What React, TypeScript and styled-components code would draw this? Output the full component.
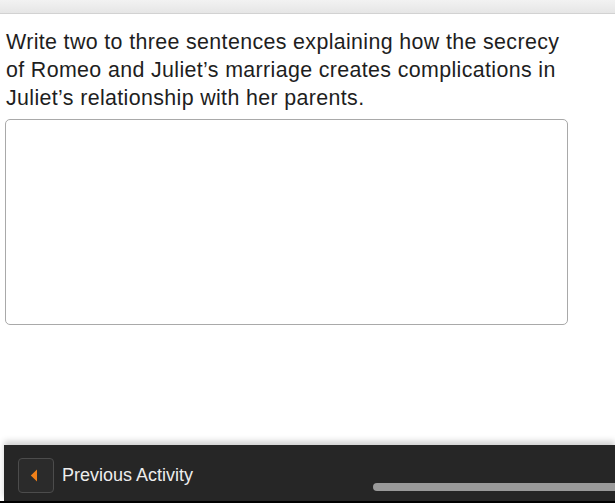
import styled, { createGlobalStyle } from "styled-components";

const GlobalStyle = createGlobalStyle`
  html, body {
    margin: 0;
    padding: 0;
    background: #ffffff;
  }
  body {
    font-family: "Liberation Sans", Arial, sans-serif;
  }
`;

export default function App() {
  return (
    <>
      <GlobalStyle />
      <Page>
        <TopBar />
        <Content>
          <Prompt>
            Write two to three sentences explaining how the secrecy of Romeo
            and Juliet’s marriage creates complications in Juliet’s
            relationship with her parents.
          </Prompt>
          <Answer aria-label="Your answer" />
        </Content>
        <Footer>
          <PrevButton aria-label="Previous Activity">
            <svg width="8" height="13" viewBox="0 0 8 13">
              <path d="M7 0.5 L0.8 6.5 L7 12.5 Z" fill="#f08019" />
            </svg>
          </PrevButton>
          <PrevLabel>Previous Activity</PrevLabel>
          <Progress />
        </Footer>
        <BottomEdge />
      </Page>
    </>
  );
}

const Page = styled.div`
  display: flex;
  flex-direction: column;
  height: 503px;
  overflow: hidden;
`;

const TopBar = styled.div`
  height: 13px;
  flex-shrink: 0;
  background: linear-gradient(#f2f2f2, #e6e6e6);
  border-bottom: 1px solid #d2d2d2;
`;

const Content = styled.div`
  flex: 1;
  padding: 14px 0 0 6px;
  box-sizing: border-box;
`;

const Prompt = styled.p`
  margin: 0;
  width: 560px;
  font-size: 21.4px;
  line-height: 28px;
  letter-spacing: 0.36px;
  color: #1e1e1e;
`;

const Answer = styled.textarea`
  display: block;
  margin: 7px 0 0 -1px;
  width: 563px;
  height: 206px;
  box-sizing: border-box;
  border: 1.5px solid #a9a9a9;
  border-radius: 5px;
  background: #ffffff;
  resize: none;
  outline: none;
  font-family: "Liberation Sans", Arial, sans-serif;
  font-size: 18px;
  padding: 8px;
`;

const Footer = styled.div`
  position: relative;
  flex-shrink: 0;
  height: 56px;
  margin-left: 4px;
  display: flex;
  align-items: center;
  padding-left: 14px;
  background: #262626;
  box-shadow: 0 -4px 6px rgba(0, 0, 0, 0.18);
`;

const PrevButton = styled.button`
  width: 36px;
  height: 35px;
  margin-top: 4px;
  display: flex;
  align-items: center;
  justify-content: center;
  padding: 0 4px 0 0;
  background: #2b2b2b;
  border: 1.5px solid #4c4c4c;
  border-radius: 4px;
  box-sizing: border-box;
  cursor: pointer;
`;

const PrevLabel = styled.span`
  margin: 4px 0 0 8px;
  font-size: 18px;
  color: #ededed;
`;

const Progress = styled.div`
  align-self: flex-end;
  margin: 0 0 10px auto;
  width: 242px;
  height: 8px;
  background: #9a9a9a;
  border-radius: 4px 0 0 4px;
`;

const BottomEdge = styled.div`
  height: 2px;
  flex-shrink: 0;
  background: #000000;
`;
